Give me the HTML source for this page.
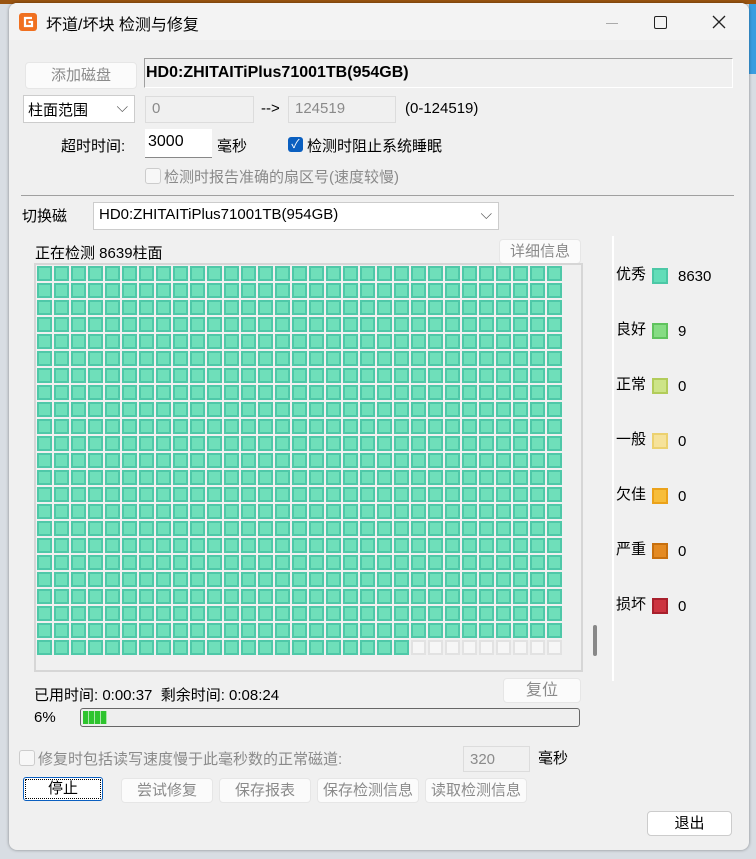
<!DOCTYPE html>
<html><head><meta charset="utf-8"><style>
body{margin:0;width:756px;height:859px;position:relative;overflow:hidden;background:#d8dde3;font-family:"Liberation Sans","Noto Sans CJK SC",sans-serif;font-size:15px;color:#000}
.a{position:absolute;white-space:nowrap}
.win{position:absolute;left:9px;top:3px;width:740px;height:847px;background:#f0f0f0;border-radius:8px;box-shadow:0 0 3px rgba(0,0,0,.4);overflow:hidden}
.btn{position:absolute;background:#fbfbfb;border:1px solid #e6e6e6;border-radius:4px;color:#8a8a8a;text-align:center;font-size:15px}
.box{position:absolute;background:#f0f0f0;border:1px solid #dcdcdc;color:#8a8a8a;font-size:15px;box-sizing:border-box;padding:3px 6px}
.lg{position:absolute;left:607px;font-size:15px;line-height:22px;height:22px}
.lg i{position:absolute;left:36px;top:4px;width:12px;height:12px;border:2px solid}
.lg b{position:absolute;left:62px;top:2px;font-weight:normal}
</style></head><body>
<div class="a" style="left:0;top:0;width:756px;height:4px;background:#9a5410"></div>
<div class="a" style="left:749px;top:4px;width:7px;height:70px;background:#3a9de0"></div>
<div class="win">
 <div class="a" style="left:0;top:0;width:740px;height:37px;background:#f3f3f3"></div>
 <svg class="a" style="left:10px;top:10px" width="18" height="18"><rect width="18" height="18" rx="3" fill="#f07020"/><path d="M13 5H6v8h7V9H9.5" stroke="#fff" stroke-width="2.2" fill="none"/></svg>
 <div class="a" style="left:37px;top:8px;font-size:16px">坏道/坏块 检测与修复</div>
 <div class="a" style="left:597px;top:20px;width:12px;height:1px;background:#aaa"></div>
 <div class="a" style="left:645px;top:13px;width:11px;height:11px;border:1.5px solid #222;border-radius:2px"></div>
 <svg class="a" style="left:703px;top:12px" width="14" height="14"><path d="M1 1L13 13M13 1L1 13" stroke="#222" stroke-width="1.3"/></svg>

 <div class="btn" style="left:16px;top:59px;width:110px;height:25px;line-height:25px">添加磁盘</div>
 <div class="a" style="left:135px;top:55px;width:589px;height:30px;border-top:1px solid #a0a0a0;border-left:1px solid #a0a0a0;border-right:1px solid #fff;border-bottom:1px solid #fff;box-sizing:border-box"></div>
 <div class="a" style="left:137px;top:61px;font-weight:bold;font-size:16px">HD0:ZHITAITiPlus71001TB(954GB)</div>

 <div class="a" style="left:14px;top:92px;width:112px;height:28px;background:#fff;border:1px solid #ccc;box-sizing:border-box;padding:3px 4px">柱面范围<span style="position:absolute;right:6px;top:3px;color:#555">⌵</span></div>
 <div class="box" style="left:136px;top:93px;width:109px;height:27px">0</div>
 <div class="a" style="left:252px;top:97px">--&gt;</div>
 <div class="box" style="left:279px;top:93px;width:108px;height:27px">124519</div>
 <div class="a" style="left:396px;top:97px">(0-124519)</div>

 <div class="a" style="left:52px;top:132px">超时时间:</div>
 <div class="a" style="left:136px;top:126px;width:67px;height:29px;background:#fff;border-bottom:1px solid #888;box-sizing:border-box;padding:4px 3px;font-size:16px">3000</div>
 <div class="a" style="left:208px;top:132px">毫秒</div>
 <div class="a" style="left:279px;top:134px;width:15px;height:15px;background:#0a5fc0;border-radius:3px;color:#fff;font-size:12px;line-height:15px;text-align:center">✓</div>
 <div class="a" style="left:298px;top:132px">检测时阻止系统睡眠</div>
 <div class="a" style="left:136px;top:165px;width:14px;height:14px;border:1px solid #ccc;border-radius:3px;background:#f7f7f7"></div>
 <div class="a" style="left:155px;top:163px;color:#8a8a8a">检测时报告准确的扇区号(速度较慢)</div>
 <div class="a" style="left:12px;top:192px;width:713px;height:1px;background:#a0a0a0"></div>

 <div class="a" style="left:13px;top:202px">切换磁</div>
 <div class="a" style="left:84px;top:199px;width:406px;height:28px;background:#fff;border:1px solid #ccc;box-sizing:border-box;padding:3px 5px">HD0:ZHITAITiPlus71001TB(954GB)<span style="position:absolute;right:6px;top:3px;color:#555">⌵</span></div>

 <div class="a" style="left:21px;top:233px;width:582px;height:445px;background:#f0f0f0;border-right:2px solid #fff"></div>
 <div class="a" style="left:26px;top:239px">正在检测 8639柱面</div>
 <div class="btn" style="left:490px;top:236px;width:80px;height:23px;line-height:23px">详细信息</div>
 <div class="a" style="left:25px;top:260px;width:549px;height:409px;border:2px solid #d6d6d6;box-sizing:border-box"></div>
 <svg class="a" style="left:28px;top:263px" width="530" height="395">
  <defs>
   <pattern id="f" width="17" height="17" patternUnits="userSpaceOnUse"><rect x="0" y="0" width="15" height="15" fill="#4fc8a8"/><rect x="2" y="2" width="11" height="11" fill="#6fdfba"/></pattern>
   <pattern id="e" width="17" height="17" patternUnits="userSpaceOnUse"><rect x="0" y="0" width="15" height="15" fill="#e2e2e2"/><rect x="2" y="2" width="11" height="11" fill="#f6f6f6"/></pattern>
  </defs>
  <rect x="0" y="0" width="527" height="374" fill="url(#f)"/>
  <rect x="0" y="374" width="374" height="17" fill="url(#f)"/>
  <rect x="374" y="374" width="153" height="17" fill="url(#e)"/>
 </svg>
 <div class="a" style="left:584px;top:622px;width:4px;height:31px;background:#888;border-radius:2px"></div>

 <div class="lg" style="top:261px">优秀<i style="background:#62ddb8;border-color:#4cc8a6"></i><b>8630</b></div>
 <div class="lg" style="top:316px">良好<i style="background:#86dc84;border-color:#60c35e"></i><b>9</b></div>
 <div class="lg" style="top:371px">正常<i style="background:#cde487;border-color:#b2cc5a"></i><b>0</b></div>
 <div class="lg" style="top:426px">一般<i style="background:#f6e29a;border-color:#ecd170"></i><b>0</b></div>
 <div class="lg" style="top:481px">欠佳<i style="background:#f7bd3a;border-color:#eba21a"></i><b>0</b></div>
 <div class="lg" style="top:536px">严重<i style="background:#e48a22;border-color:#c8700e"></i><b>0</b></div>
 <div class="lg" style="top:591px">损坏<i style="background:#cc3440;border-color:#a8202c"></i><b>0</b></div>

 <div class="a" style="left:25px;top:681px">已用时间: 0:00:37&nbsp; 剩余时间: 0:08:24</div>
 <div class="btn" style="left:494px;top:675px;width:76px;height:23px;line-height:23px;font-size:16px">复位</div>
 <div class="a" style="left:25px;top:706px">6%</div>
 <div class="a" style="left:71px;top:705px;width:500px;height:19px;border:1px solid #666;border-radius:3px;box-sizing:border-box;background:#eee"></div>
 <div class="a" style="left:74px;top:708px;width:24px;height:13px;background:repeating-linear-gradient(90deg,#2ec42e 0 5px,#a8e8a8 5px 6px)"></div>

 <div class="a" style="left:10px;top:747px;width:14px;height:14px;border:1px solid #ccc;border-radius:3px;background:#f7f7f7"></div>
 <div class="a" style="left:29px;top:745px;color:#8a8a8a">修复时包括读写速度慢于此毫秒数的正常磁道:</div>
 <div class="box" style="left:454px;top:743px;width:67px;height:26px;padding-top:4px">320</div>
 <div class="a" style="left:529px;top:744px">毫秒</div>

 <div class="a" style="left:14px;top:774px;width:80px;height:24px;background:#fff;border:1px solid #0a5fc0;border-radius:3px;text-align:center;line-height:22px;box-sizing:border-box;outline:1px dotted #000;outline-offset:-3px">停止</div>
 <div class="btn" style="left:112px;top:775px;width:90px;height:23px;line-height:23px">尝试修复</div>
 <div class="btn" style="left:210px;top:775px;width:90px;height:23px;line-height:23px">保存报表</div>
 <div class="btn" style="left:308px;top:775px;width:100px;height:23px;line-height:23px">保存检测信息</div>
 <div class="btn" style="left:416px;top:775px;width:100px;height:23px;line-height:23px">读取检测信息</div>
 <div class="a" style="left:638px;top:808px;width:85px;height:25px;background:#fff;border:1px solid #ccc;border-radius:4px;text-align:center;line-height:23px;box-sizing:border-box">退出</div>
</div>
</body></html>
